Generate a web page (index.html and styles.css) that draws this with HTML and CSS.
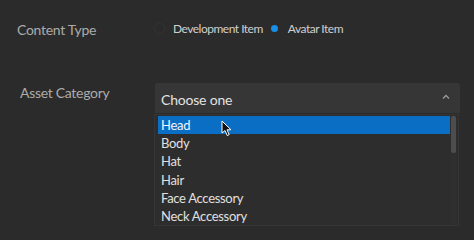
FILE: index.html
```html
<!DOCTYPE html>
<html>
<head>
<meta charset="utf-8">
<link rel="stylesheet" href="styles.css">
</head>
<body>
<div class="form">
  <div class="row row-type">
    <div class="label label-type">Content Type</div>
    <div class="radios">
      <label class="radio"><span class="dot"></span><span class="rtext">Development Item</span></label>
      <label class="radio checked"><span class="dot"></span><span class="rtext">Avatar Item</span></label>
    </div>
  </div>
  <div class="row row-cat">
    <div class="label label-cat">Asset Category</div>
    <div class="select-wrap">
      <div class="select">
        <span class="placeholder">Choose one</span>
        <svg class="chev" width="8" height="6" viewBox="0 0 8 6"><path d="M1 4.5 L4 1.5 L7 4.5" fill="none" stroke="#9a9a9a" stroke-width="1.3"/></svg>
      </div>
      <div class="list">
        <ul class="options">
          <li class="opt active">Head</li>
          <li class="opt">Body</li>
          <li class="opt">Hat</li>
          <li class="opt">Hair</li>
          <li class="opt">Face Accessory</li>
          <li class="opt">Neck Accessory</li>
        </ul>
        <div class="scroll"><div class="thumb"></div></div>
      </div>
      <svg class="cursor" width="12" height="17" viewBox="0 0 12 17"><path d="M1 1 L1 13 L4 10.5 L6.2 15.5 L8.2 14.6 L6 9.8 L10 9.8 Z" fill="#111" stroke="#fff" stroke-width="1" stroke-linejoin="round"/></svg>
    </div>
  </div>
</div>
</body>
</html>
```
FILE: styles.css
```css
html, body {
  margin: 0;
  padding: 0;
  background: #2b2b2b;
  width: 474px;
  height: 240px;
  overflow: hidden;
  font-family: "Lato", "Noto Sans", sans-serif;
}
.form {
  display: flex;
  flex-direction: column;
}
.row {
  display: flex;
}
.label {
  color: #ababab;
  font-size: 14px;
  letter-spacing: -0.3px;
}
.row-type {
  height: 59px;
  align-items: center;
}
.label-type {
  width: 137px;
  padding-left: 17px;
  line-height: 18px;
}
.radios {
  display: flex;
  align-items: center;
  gap: 8px;
  margin-top: -2px;
}
.radio {
  display: flex;
  align-items: center;
  gap: 8px;
  color: #cfcfcf;
  font-size: 12px;
  letter-spacing: -0.5px;
}
.dot {
  width: 11px;
  height: 11px;
  border-radius: 50%;
  border: 1px solid #343434;
  background: #2a2a2a;
  box-sizing: border-box;
}
.radio.checked {
  gap: 10px;
}
.radio.checked .dot {
  width: 7px;
  height: 7px;
  border: none;
  background: #1a8fe6;
  margin-top: -1px;
}
.row-cat {
  padding-top: 24px;
}
.label-cat {
  width: 134px;
  padding-left: 20px;
  line-height: 20px;
}
.select-wrap {
  position: relative;
  width: 306px;
}
.select {
  height: 30px;
  margin-left: 1px;
  background: #363636;
  display: flex;
  align-items: center;
  justify-content: space-between;
  padding: 0 10px 0 6px;
  box-sizing: border-box;
  border-radius: 2px 2px 0 0;
}
.placeholder {
  color: #e2e2e2;
  font-size: 14px;
  letter-spacing: -0.2px;
  margin-top: 2px;
}
.chev {
  margin-top: -2px;
}
.list {
  margin-top: 1px;
  width: 305px;
  height: 112px;
  background: #2d2d2d;
  border: 1px solid #353535;
  box-sizing: border-box;
  display: flex;
  padding: 1px 1px 0 3px;
}
.options {
  list-style: none;
  margin: 0;
  padding: 0;
  flex: 1;
}
.opt {
  height: 18.2px;
  line-height: 18px;
  padding-left: 3px;
  font-size: 13px;
  letter-spacing: -0.3px;
  color: #e0e0e0;
}
.opt.active {
  background: #0a6fc4;
  color: #f0f4fa;
}
.scroll {
  width: 5px;
  margin-left: 1px;
  margin-right: 1px;
  background: #2f2f2f;
  border-radius: 2px;
}
.thumb {
  height: 37px;
  background: #4d4d4d;
  border-radius: 2px;
}
.cursor {
  position: absolute;
  left: 67px;
  top: 37px;
}
```
